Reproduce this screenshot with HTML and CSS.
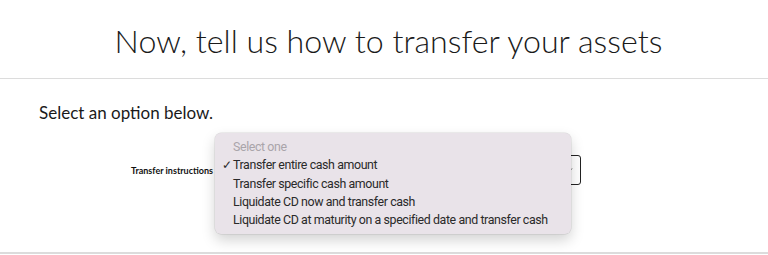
FILE: index.html
```html
<!DOCTYPE html>
<html lang="en">
<head>
    <meta charset="UTF-8">
    <meta name="viewport" content="width=device-width, initial-scale=1.0">
    <title>Transfer your assets</title>
    <link rel="stylesheet" href="styles.css">
</head>
<body>
    <header class="page-head">
        <h1>Now, tell us how to transfer your assets</h1>
    </header>

    <section class="panel">
        <p class="lead">Select an option below.</p>

        <div class="field">
            <label class="field-label">Transfer instructions</label>
            <div class="select-wrap">
                <div class="select-box">
                    <svg class="chevron" width="8" height="6" viewBox="0 0 8 6"><path d="M1 1.5 L4 4.5 L7 1.5" fill="none" stroke="#555" stroke-width="1"/></svg>
                </div>
                <ul class="menu">
                    <li class="placeholder">Select one</li>
                    <li class="checked"><span class="tick">✓</span>Transfer entire cash amount</li>
                    <li>Transfer specific cash amount</li>
                    <li>Liquidate CD now and transfer cash</li>
                    <li>Liquidate CD at maturity on a specified date and transfer cash</li>
                </ul>
            </div>
        </div>
    </section>
</body>
</html>
```

FILE: styles.css
```css
body {
    margin: 0;
    background: #fff;
    color: #1a1a1a;
    font-family: Lato, "Open Sans", sans-serif;
}
.page-head {
    height: 78px;
    border-bottom: 1px solid #dcdcdc;
    display: flex;
    justify-content: center;
    align-items: center;
    padding-left: 9px;
}
.page-head h1 {
    margin: 0;
    padding-top: 2px;
    font-weight: 300;
    font-size: 32.2px;
}
.panel {
    height: 173px;
    border-bottom: 2px solid #dcdcdc;
    padding: 0 39px;
}
.lead {
    margin: 0;
    padding-top: 23px;
    font-size: 17px;
}
.field {
    display: flex;
    align-items: center;
    margin-top: 32px;
}
.field-label {
    width: 174px;
    text-align: right;
    font-size: 9px;
    font-weight: 700;
    font-family: Lato, sans-serif;
    color: #111;
}
.select-wrap {
    position: relative;
    margin-left: 3px;
}
.select-box {
    box-sizing: border-box;
    width: 365px;
    height: 30px;
    border: 1.5px solid #222;
    border-radius: 3px;
    display: flex;
    justify-content: flex-end;
    align-items: center;
    padding-right: 7px;
}
.chevron {
    display: block;
}
.menu {
    position: absolute;
    left: -1px;
    top: -22px;
    width: 356px;
    margin: 0;
    padding: 5px 0 5px;
    list-style: none;
    background: #e9e3e9;
    border-radius: 6px;
    box-shadow: 0 0 0 0.5px rgba(0,0,0,0.12), 0 6px 14px rgba(0,0,0,0.18);
    font-family: Roboto, sans-serif;
    font-size: 12.4px;
    letter-spacing: -0.4px;
    color: #2a2a2a;
}
.menu li {
    position: relative;
    height: 18.3px;
    line-height: 18.3px;
    padding-left: 18px;
    white-space: nowrap;
}
.menu .placeholder {
    color: #a9a5aa;
}
.tick {
    position: absolute;
    left: 7px;
    font-size: 12px;
}
```
